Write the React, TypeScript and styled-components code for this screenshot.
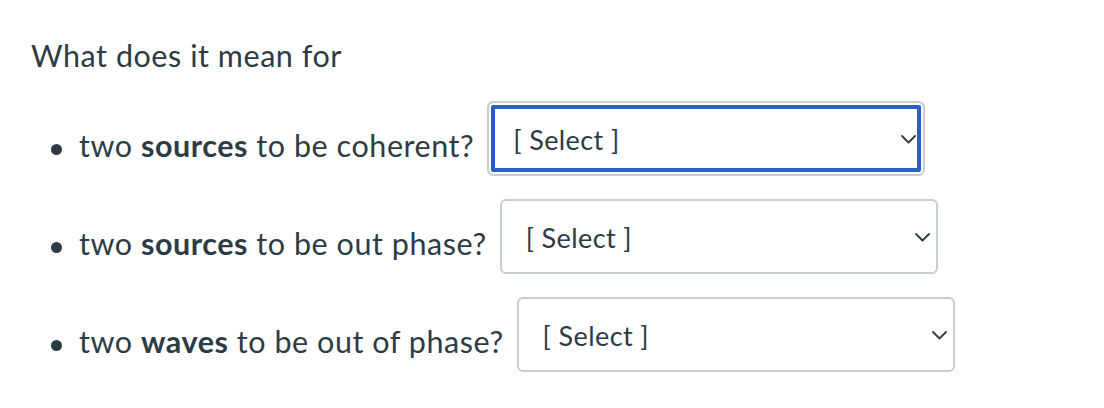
import React from "react";
import styled, { createGlobalStyle } from "styled-components";

const Global = createGlobalStyle`
  html, body { margin: 0; padding: 0; background: #ffffff; }
  body { font-family: Lato, "Noto Sans", sans-serif; color: #2D3B45; }
`;

const Page = styled.div`
  padding: 33px 0 0 31px;
  font-size: 30.5px;
  letter-spacing: 0.55px;
  line-height: 44px;
`;

const Title = styled.p`
  margin: 0 0 24px 0;
`;

const List = styled.ul`
  list-style: none;
  margin: 0;
  padding: 0 0 0 20px;
  display: flex;
  flex-direction: column;
  gap: 23px;
`;

const Item = styled.li`
  display: flex;
  align-items: flex-start;
  gap: 13px;
`;

const Label = styled.span`
  padding-top: 22px;
  white-space: nowrap;
`;

const Bullet = styled.span`
  display: inline-block;
  width: 11px;
  height: 11px;
  border-radius: 50%;
  background: #2D3B45;
  vertical-align: middle;
  margin-right: 17px;
`;

const Strong = styled.strong`
  font-weight: 700;
`;

const SelectWrap = styled.span`
  position: relative;
  display: inline-flex;
`;

const NativeSelect = styled.select<{ $focused?: boolean }>`
  appearance: none;
  -webkit-appearance: none;
  width: 438px;
  height: 75px;
  box-sizing: border-box;
  border: 2px solid #C7CDD1;
  border-radius: 6px;
  background: #ffffff;
  color: #2D3B45;
  font-family: Lato, "Noto Sans", sans-serif;
  font-size: 27px;
  letter-spacing: 0.4px;
  padding: 2px 40px 0 24px;
  outline: none;
  box-shadow: ${(p) =>
    p.$focused ? "inset 0 0 0 2px #ffffff, inset 0 0 0 6px #2B5FC7" : "none"};
`;

const Chevron = styled.svg<{ $focused?: boolean }>`
  position: absolute;
  right: ${(p) => (p.$focused ? "9px" : "8px")};
  top: 50%;
  margin-top: -4px;
  width: 15px;
  height: 9px;
  pointer-events: none;
`;

function Dropdown({ focused }: { focused?: boolean }) {
  return (
    <SelectWrap>
      <NativeSelect $focused={focused} defaultValue="">
        <option value="">[ Select ]</option>
      </NativeSelect>
      <Chevron $focused={focused} viewBox="0 0 15 9">
        <path
          d="M1 1 L7.5 7.5 L14 1"
          fill="none"
          stroke="#2D3B45"
          strokeWidth="1.8"
          strokeLinecap="round"
          strokeLinejoin="round"
        />
      </Chevron>
    </SelectWrap>
  );
}

const rows = [
  { pre: "two ", bold: "sources", post: " to be coherent?", focused: true },
  { pre: "two ", bold: "sources", post: " to be out phase?", focused: false },
  { pre: "two ", bold: "waves", post: " to be out of phase?", focused: false },
];

export default function App() {
  return (
    <>
      <Global />
      <Page>
        <Title>What does it mean for</Title>
        <List>
          {rows.map((r, i) => (
            <Item key={i}>
              <Label>
                <Bullet />
                {r.pre}
                <Strong>{r.bold}</Strong>
                {r.post}
              </Label>
              <Dropdown focused={r.focused} />
            </Item>
          ))}
        </List>
      </Page>
    </>
  );
}
